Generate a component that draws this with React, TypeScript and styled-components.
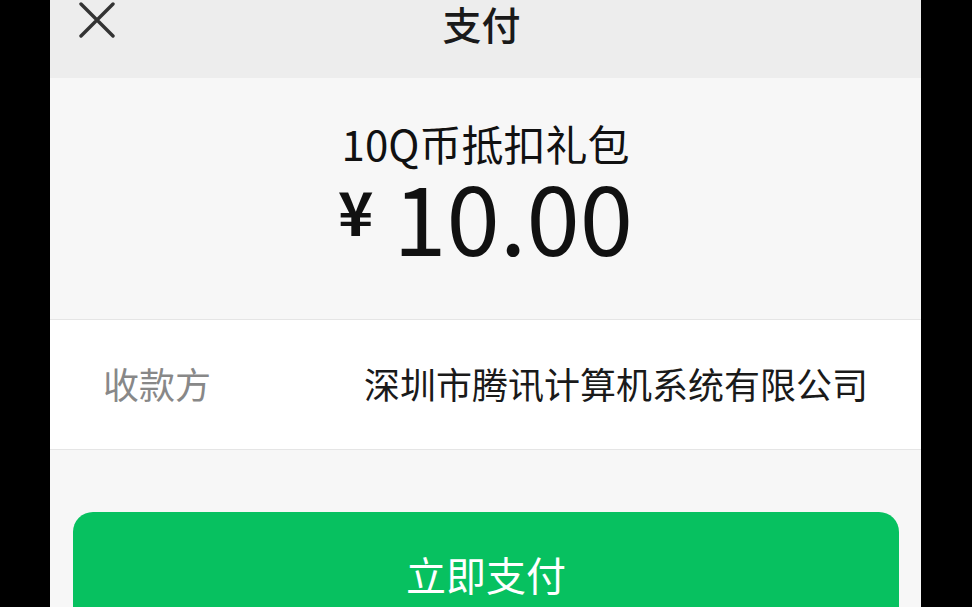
import { createGlobalStyle, styled } from "styled-components";

const GlobalStyle = createGlobalStyle`
  html, body {
    margin: 0;
    padding: 0;
    background: #000000;
  }
  body {
    font-family: "Noto Sans CJK SC", "Noto Sans", sans-serif;
  }
`;

const CloseIcon = () => (
  <svg width="36" height="36" viewBox="0 0 36 36" fill="none">
    <path d="M2 2 L34 34 M34 2 L2 34" stroke="#333333" strokeWidth="3.4" strokeLinecap="round" />
  </svg>
);

const App = (): JSX.Element => {
  return (
    <>
      <GlobalStyle />
      <Screen>
        <Header>
          <CloseButton>
            <CloseIcon />
          </CloseButton>
          <HeaderTitle>支付</HeaderTitle>
          <span />
        </Header>
        <Summary>
          <ProductName>10Q币抵扣礼包</ProductName>
          <Amount>
            <Currency>¥</Currency>
            <Price>10.00</Price>
          </Amount>
        </Summary>
        <InfoRow>
          <InfoLabel>收款方</InfoLabel>
          <InfoValue>深圳市腾讯计算机系统有限公司</InfoValue>
        </InfoRow>
        <PayButton>立即支付</PayButton>
      </Screen>
    </>
  );
};

export default App;

const Screen = styled.div`
  width: 871px;
  height: 607px;
  margin-left: 50px;
  background-color: #f7f7f7;
  overflow: hidden;
  display: flex;
  flex-direction: column;
`;

const Header = styled.div`
  height: 78px;
  flex-shrink: 0;
  background-color: #ededed;
  display: grid;
  grid-template-columns: 1fr auto 1fr;
  align-items: start;
`;

const CloseButton = styled.div`
  padding: 2px 0 0 29px;
  line-height: 0;
`;

const HeaderTitle = styled.div`
  font-size: 39px;
  font-weight: 500;
  line-height: 44px;
  padding-top: 1px;
  margin-left: -8px;
  color: #1a1a1a;
`;

const Summary = styled.div`
  height: 242px;
  flex-shrink: 0;
  display: flex;
  flex-direction: column;
  align-items: center;
  padding-top: 40px;
  box-sizing: border-box;
  border-bottom: 1px solid #e5e5e5;
`;

const ProductName = styled.div`
  font-size: 42px;
  line-height: 50px;
  color: #111111;
`;

const Amount = styled.div`
  display: flex;
  align-items: center;
  gap: 20px;
  margin-top: -1px;
  color: #111111;
`;

const Currency = styled.span`
  font-size: 60px;
  font-weight: 700;
  line-height: 1;
  margin-bottom: 10px;
`;

const Price = styled.span`
  font-size: 96px;
  font-weight: 400;
  line-height: 1;
`;

const InfoRow = styled.div`
  height: 130px;
  flex-shrink: 0;
  background-color: #ffffff;
  border-bottom: 1px solid #e5e5e5;
  display: flex;
  align-items: center;
  justify-content: space-between;
  padding: 0 53px 4px;
  box-sizing: border-box;
  font-size: 36px;
`;

const InfoLabel = styled.span`
  color: #888888;
`;

const InfoValue = styled.span`
  color: #1a1a1a;
`;

const PayButton = styled.button`
  flex-shrink: 0;
  margin: 62px 22px 0 23px;
  height: 124px;
  border: none;
  border-radius: 20px;
  background-color: #07c160;
  color: #ffffff;
  font-family: "Noto Sans CJK SC", "Noto Sans", sans-serif;
  font-size: 40px;
  padding: 0;
`;
